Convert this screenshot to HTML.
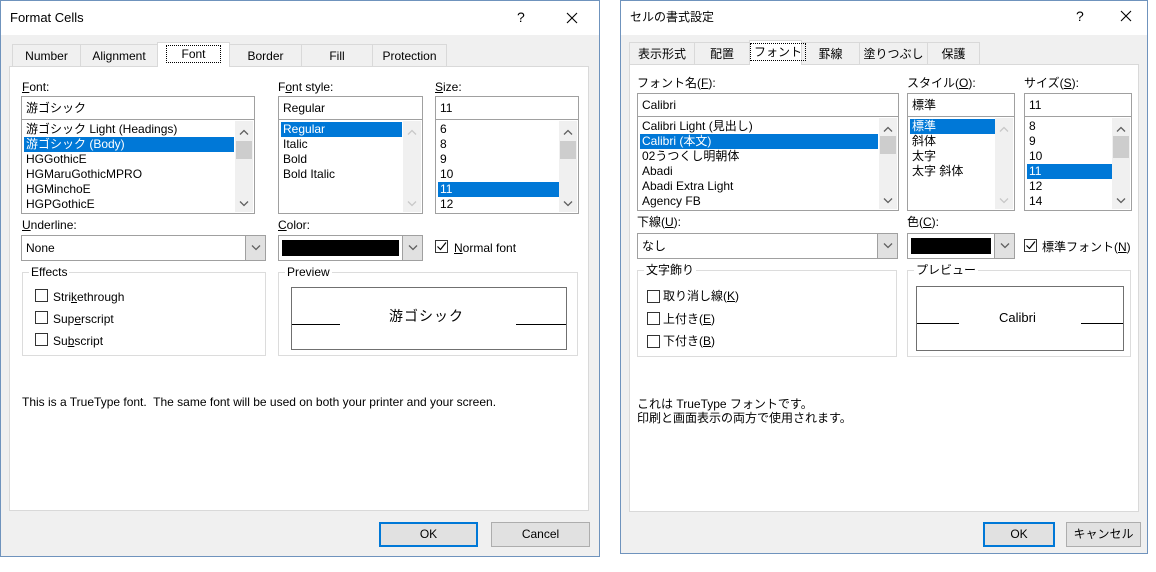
<!DOCTYPE html>
<html><head><meta charset="utf-8"><style>
*{box-sizing:border-box;margin:0;padding:0}
body{width:1156px;height:572px;background:#fff;position:relative;overflow:hidden;font-family:"Segoe UI","Liberation Sans","Noto Sans CJK JP",sans-serif;font-size:12px;color:#000}
.a{position:absolute}
.dlg{position:absolute;background:#f0f0f0;border:1px solid #6f93bd}
.tb{position:absolute;left:0;right:0;top:0;height:34px;background:#fff}
.t{position:absolute;white-space:nowrap;line-height:14px}
.tab{position:absolute;height:23px;border:1px solid #d9d9d9;border-bottom:none;background:#f0f0f0;text-align:center;line-height:22px;white-space:nowrap}
.tab.s{background:#fff;height:25px;z-index:2}
.tab.s span{border:1px dotted #000;padding:1px 14px}
.pan{position:absolute;background:#fff;border:1px solid #d9d9d9}
.box{position:absolute;border:1px solid #a0a0a0;background:#fff}
.row{position:absolute;left:2px;height:15px;line-height:15px;padding-left:2px;white-space:nowrap}
.sel{background:#0078d7;color:#fff}
.sb{position:absolute;top:1px;bottom:1px;width:18px;background:#f0f0f0}
.thumb{position:absolute;left:1px;width:16px;height:18px;background:#cdcdcd}
.chev{position:absolute;left:4px;width:10px;height:6px}
.dd{position:absolute;right:0;top:0;bottom:0;width:20px;background:#e1e1e1;border-left:1px solid #a0a0a0}
.dd svg{position:absolute;left:5px;top:9px}
.grp{position:absolute;border:1px solid #dcdcdc}
.gl{position:absolute;top:-8px;left:6px;background:#fff;padding:0 2px;line-height:14px}
.cb{position:absolute;width:13px;height:13px;border:1px solid #333;background:#fff}
.btn{position:absolute;height:25px;border:1px solid #adadad;background:#e1e1e1;text-align:center;line-height:23px}
.btn.d{border:2px solid #0078d7;line-height:21px}
u{text-decoration:underline}
</style></head><body>
<svg width="0" height="0" style="position:absolute"><defs>
<symbol id="up" viewBox="0 0 10 6"><path d="M1 5.5L5 1.5L9 5.5" fill="none" stroke="currentColor" stroke-width="1.3"/></symbol>
<symbol id="dn" viewBox="0 0 10 6"><path d="M1 0.5L5 4.5L9 0.5" fill="none" stroke="currentColor" stroke-width="1.3"/></symbol>
<symbol id="x" viewBox="0 0 12 12"><path d="M1 1L11 11M11 1L1 11" fill="none" stroke="#000" stroke-width="1.1"/></symbol>
<symbol id="ck" viewBox="0 0 13 13"><path d="M2.5 6.5L5.5 9.5L11 2.5" fill="none" stroke="#000" stroke-width="1.2"/></symbol>
</defs></svg>

<!-- LEFT DIALOG -->
<div class="dlg" style="left:0;top:0;width:600px;height:557px">
<div class="tb"></div>
<div class="t" style="left:9px;top:10px;font-size:13px">Format Cells</div>
<div class="t" style="left:516px;top:9px;font-size:14px">?</div>
<svg class="a" style="left:565px;top:11px" width="12" height="12"><use href="#x"/></svg>
<div class="tab" style="left:11px;top:43px;width:69px">Number</div>
<div class="tab" style="left:79px;top:43px;width:78px">Alignment</div>
<div class="tab s" style="left:156px;top:41px;width:73px"><span>Font</span></div>
<div class="tab" style="left:228px;top:43px;width:73px">Border</div>
<div class="tab" style="left:300px;top:43px;width:72px">Fill</div>
<div class="tab" style="left:371px;top:43px;width:75px">Protection</div>
<div class="pan" style="left:8px;top:65px;width:580px;height:445px"></div>

<div class="t" style="left:21px;top:79px"><u>F</u>ont:</div>
<div class="box" style="left:20px;top:95px;width:234px;height:24px"><div class="t" style="left:4px;top:4px">游ゴシック</div></div>
<div class="box" style="left:20px;top:118px;width:234px;height:95px">
 <div class="row" style="top:2px">游ゴシック Light (Headings)</div>
 <div class="row sel" style="top:17px;width:210px">游ゴシック (Body)</div>
 <div class="row" style="top:32px">HGGothicE</div>
 <div class="row" style="top:47px">HGMaruGothicMPRO</div>
 <div class="row" style="top:62px">HGMinchoE</div>
 <div class="row" style="top:77px">HGPGothicE</div>
 <div class="sb" style="right:1px;color:#606060"><svg class="chev" style="top:8px"><use href="#up"/></svg><div class="thumb" style="top:20px"></div><svg class="chev" style="top:80px"><use href="#dn"/></svg></div>
</div>

<div class="t" style="left:277px;top:79px">F<u>o</u>nt style:</div>
<div class="box" style="left:277px;top:95px;width:145px;height:24px"><div class="t" style="left:4px;top:4px">Regular</div></div>
<div class="box" style="left:277px;top:118px;width:145px;height:95px">
 <div class="row sel" style="top:2px;width:121px">Regular</div>
 <div class="row" style="top:17px">Italic</div>
 <div class="row" style="top:32px">Bold</div>
 <div class="row" style="top:47px">Bold Italic</div>
 <div class="sb" style="right:1px;color:#c8c8c8"><svg class="chev" style="top:8px"><use href="#up"/></svg><svg class="chev" style="top:80px"><use href="#dn"/></svg></div>
</div>

<div class="t" style="left:434px;top:79px"><u>S</u>ize:</div>
<div class="box" style="left:434px;top:95px;width:144px;height:24px"><div class="t" style="left:4px;top:4px">11</div></div>
<div class="box" style="left:434px;top:118px;width:144px;height:95px">
 <div class="row" style="top:2px">6</div>
 <div class="row" style="top:17px">8</div>
 <div class="row" style="top:32px">9</div>
 <div class="row" style="top:47px">10</div>
 <div class="row sel" style="top:62px;width:121px">11</div>
 <div class="row" style="top:77px">12</div>
 <div class="sb" style="right:1px;color:#606060"><svg class="chev" style="top:8px"><use href="#up"/></svg><div class="thumb" style="top:20px"></div><svg class="chev" style="top:80px"><use href="#dn"/></svg></div>
</div>

<div class="t" style="left:21px;top:217px"><u>U</u>nderline:</div>
<div class="box" style="left:20px;top:234px;width:245px;height:26px"><div class="t" style="left:4px;top:5px">None</div><div class="dd"><svg width="10" height="6" style="color:#606060"><use href="#dn"/></svg></div></div>
<div class="t" style="left:277px;top:217px"><u>C</u>olor:</div>
<div class="box" style="left:277px;top:234px;width:145px;height:26px"><div class="a" style="left:3px;top:4px;width:117px;height:16px;background:#000"></div><div class="dd"><svg width="10" height="6" style="color:#606060"><use href="#dn"/></svg></div></div>
<div class="cb" style="left:434px;top:239px"></div><svg class="a" style="left:434px;top:239px" width="13" height="13"><use href="#ck"/></svg>
<div class="t" style="left:453px;top:240px"><u>N</u>ormal font</div>

<div class="grp" style="left:21px;top:271px;width:244px;height:84px"><div class="gl">Effects</div></div>
<div class="cb" style="left:34px;top:288px"></div><div class="t" style="left:52px;top:289px">Stri<u>k</u>ethrough</div>
<div class="cb" style="left:34px;top:310px"></div><div class="t" style="left:52px;top:311px">Sup<u>e</u>rscript</div>
<div class="cb" style="left:34px;top:332px"></div><div class="t" style="left:52px;top:333px">Su<u>b</u>script</div>

<div class="grp" style="left:277px;top:271px;width:300px;height:84px"><div class="gl">Preview</div></div>
<div class="box" style="left:290px;top:286px;width:276px;height:63px;border-color:#707070">
 <div class="a" style="left:0;top:36px;width:48px;border-top:1px solid #000"></div>
 <div class="a" style="right:0;top:36px;width:50px;border-top:1px solid #000"></div>
 <div class="t" style="left:97px;top:21px;font-size:14px;letter-spacing:1px">游ゴシック</div>
</div>

<div class="t" style="left:21px;top:394px">This is a TrueType font.&nbsp; The same font will be used on both your printer and your screen.</div>
<div class="btn d" style="left:378px;top:521px;width:99px">OK</div>
<div class="btn" style="left:490px;top:521px;width:99px">Cancel</div>
</div>

<!-- RIGHT DIALOG -->
<div class="dlg" style="left:620px;top:0;width:528px;height:554px">
<div class="tb"></div>
<div class="t" style="left:9px;top:9px">セルの書式設定</div>
<div class="t" style="left:455px;top:8px;font-size:14px">?</div>
<svg class="a" style="left:499px;top:9px" width="12" height="12"><use href="#x"/></svg>
<div class="tab" style="left:8px;top:41px;width:66px">表示形式</div>
<div class="tab" style="left:73px;top:41px;width:56px">配置</div>
<div class="tab s" style="left:128px;top:39px;width:53px"><span style="padding:1px 3px">フォント</span></div>
<div class="tab" style="left:180px;top:41px;width:59px">罫線</div>
<div class="tab" style="left:238px;top:41px;width:69px">塗りつぶし</div>
<div class="tab" style="left:306px;top:41px;width:53px">保護</div>
<div class="pan" style="left:8px;top:63px;width:510px;height:448px"></div>

<div class="t" style="left:16px;top:75px">フォント名(<u>F</u>):</div>
<div class="box" style="left:16px;top:92px;width:262px;height:24px"><div class="t" style="left:4px;top:4px">Calibri</div></div>
<div class="box" style="left:16px;top:115px;width:262px;height:95px">
 <div class="row" style="top:2px">Calibri Light (見出し)</div>
 <div class="row sel" style="top:17px;width:238px">Calibri (本文)</div>
 <div class="row" style="top:32px">02うつくし明朝体</div>
 <div class="row" style="top:47px">Abadi</div>
 <div class="row" style="top:62px">Abadi Extra Light</div>
 <div class="row" style="top:77px">Agency FB</div>
 <div class="sb" style="right:1px;color:#606060"><svg class="chev" style="top:8px"><use href="#up"/></svg><div class="thumb" style="top:18px"></div><svg class="chev" style="top:80px"><use href="#dn"/></svg></div>
</div>

<div class="t" style="left:286px;top:75px">スタイル(<u>O</u>):</div>
<div class="box" style="left:286px;top:92px;width:108px;height:24px"><div class="t" style="left:4px;top:4px">標準</div></div>
<div class="box" style="left:286px;top:115px;width:108px;height:95px">
 <div class="row sel" style="top:2px;width:86px">標準</div>
 <div class="row" style="top:17px">斜体</div>
 <div class="row" style="top:32px">太字</div>
 <div class="row" style="top:47px">太字 斜体</div>
 <div class="sb" style="right:1px;color:#c8c8c8"><svg class="chev" style="top:8px"><use href="#up"/></svg><svg class="chev" style="top:80px"><use href="#dn"/></svg></div>
</div>

<div class="t" style="left:403px;top:75px">サイズ(<u>S</u>):</div>
<div class="box" style="left:403px;top:92px;width:108px;height:24px"><div class="t" style="left:4px;top:4px">11</div></div>
<div class="box" style="left:403px;top:115px;width:108px;height:95px">
 <div class="row" style="top:2px">8</div>
 <div class="row" style="top:17px">9</div>
 <div class="row" style="top:32px">10</div>
 <div class="row sel" style="top:47px;width:86px">11</div>
 <div class="row" style="top:62px">12</div>
 <div class="row" style="top:77px">14</div>
 <div class="sb" style="right:1px;color:#606060"><svg class="chev" style="top:8px"><use href="#up"/></svg><div class="thumb" style="top:18px;height:22px"></div><svg class="chev" style="top:80px"><use href="#dn"/></svg></div>
</div>

<div class="t" style="left:16px;top:214px">下線(<u>U</u>):</div>
<div class="box" style="left:16px;top:232px;width:261px;height:26px"><div class="t" style="left:4px;top:5px">なし</div><div class="dd"><svg width="10" height="6" style="color:#606060"><use href="#dn"/></svg></div></div>
<div class="t" style="left:286px;top:214px">色(<u>C</u>):</div>
<div class="box" style="left:286px;top:232px;width:108px;height:26px"><div class="a" style="left:3px;top:4px;width:80px;height:16px;background:#000"></div><div class="dd"><svg width="10" height="6" style="color:#606060"><use href="#dn"/></svg></div></div>
<div class="cb" style="left:403px;top:238px"></div><svg class="a" style="left:403px;top:238px" width="13" height="13"><use href="#ck"/></svg>
<div class="t" style="left:421px;top:239px">標準フォント(<u>N</u>)</div>

<div class="grp" style="left:16px;top:269px;width:260px;height:87px"><div class="gl">文字飾り</div></div>
<div class="cb" style="left:26px;top:289px"></div><div class="t" style="left:42px;top:288px">取り消し線(<u>K</u>)</div>
<div class="cb" style="left:26px;top:311px"></div><div class="t" style="left:42px;top:311px">上付き(<u>E</u>)</div>
<div class="cb" style="left:26px;top:334px"></div><div class="t" style="left:42px;top:333px">下付き(<u>B</u>)</div>

<div class="grp" style="left:286px;top:269px;width:224px;height:87px"><div class="gl">プレビュー</div></div>
<div class="box" style="left:295px;top:285px;width:208px;height:65px;border-color:#707070">
 <div class="a" style="left:0;top:36px;width:42px;border-top:1px solid #000"></div>
 <div class="a" style="right:0;top:36px;width:42px;border-top:1px solid #000"></div>
 <div class="t" style="left:82px;top:24px;font-size:13px">Calibri</div>
</div>

<div class="t" style="left:16px;top:396px">これは TrueType フォントです。</div>
<div class="t" style="left:16px;top:410px">印刷と画面表示の両方で使用されます。</div>
<div class="btn d" style="left:362px;top:521px;width:72px">OK</div>
<div class="btn" style="left:445px;top:521px;width:75px">キャンセル</div>
</div>
</body></html>
